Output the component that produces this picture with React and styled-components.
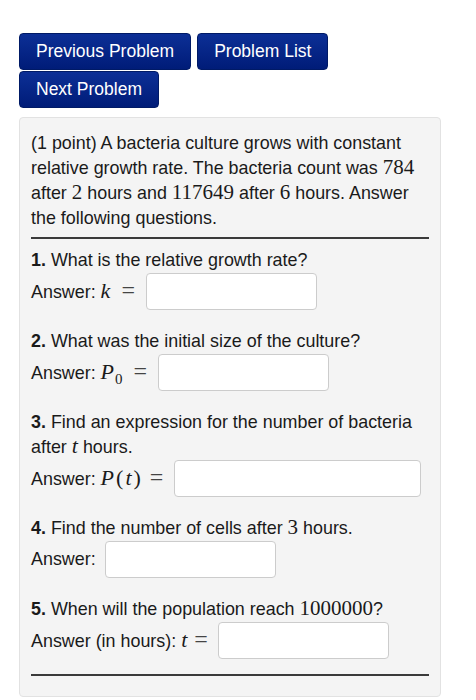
import React from "react";
import styled, { createGlobalStyle } from "styled-components";

const Global = createGlobalStyle`
  body {
    margin: 0;
    background: #ffffff;
    font-family: "Liberation Sans", Arial, sans-serif;
    color: #1a1a1a;
  }
`;

const Page = styled.div`
  padding: 33px 35px 0 19px;
`;

const Nav = styled.div`
  display: flex;
  flex-wrap: wrap;
  width: 320px;
  column-gap: 6px;
  row-gap: 1px;
  margin-bottom: 9px;
`;

const NavButton = styled.button`
  height: 37px;
  padding: 0 16px;
  border: 1px solid #001a66;
  border-radius: 4px;
  background: linear-gradient(#0c2f96, #001c78);
  color: #ffffff;
  font-family: "Liberation Sans", Arial, sans-serif;
  font-size: 17.5px;
  cursor: pointer;
`;

const Panel = styled.div`
  width: 422px;
  box-sizing: border-box;
  background: #f4f4f4;
  border: 1px solid #e2e2e2;
  border-radius: 4px;
  padding: 13px 11px 20px 11px;
  font-size: 17.9px;
  line-height: 25px;
`;

const Intro = styled.p`
  margin: 0;
`;

const Rule = styled.hr`
  border: none;
  border-top: 2px solid #3a3a3a;
  margin: ${p => p.$top || 6}px 0 0 0;
`;

const Question = styled.div`
  margin-top: ${p => p.$first ? 9 : 19}px;
`;

const Prompt = styled.div``;

const Num = styled.b``;

const AnswerRow = styled.div`
  display: flex;
  align-items: center;
  height: 37px;
  gap: ${p => p.$gap || 11}px;
`;

const M = styled.span`
  font-family: "Liberation Serif", "DejaVu Serif", serif;
  font-size: 22px;
  line-height: 1;
  font-style: ${p => p.$i ? "italic" : "normal"};
  margin: 0 ${p => p.$pad || 0}px;
`;

const Mn = styled.span`
  font-family: "Liberation Serif", "DejaVu Serif", serif;
  font-size: 21px;
  line-height: 1;
`;

const Sub = styled.sub`
  font-family: "Liberation Serif", serif;
  font-size: 15px;
  vertical-align: -5px;
  line-height: 0;
  margin-left: 1px;
`;

const Eq = styled.span`
  font-family: "Liberation Serif", serif;
  font-size: 24px;
  line-height: 1;
  margin-left: ${p => p.$gap || 11}px;
  color: #444;
`;

const Input = styled.input`
  width: ${p => p.$w || 171}px;
  height: 37px;
  box-sizing: border-box;
  border: 1px solid #cccccc;
  border-radius: 4px;
  background: #ffffff;
`;

export default function App() {
  return (
    <Page>
      <Global />
      <Nav>
        <NavButton>Previous Problem</NavButton>
        <NavButton>Problem List</NavButton>
        <NavButton>Next Problem</NavButton>
      </Nav>
      <Panel>
        <Intro>
          (1 point) A bacteria culture grows with constant relative growth rate. The bacteria count
          was <Mn>784</Mn> after <Mn>2</Mn> hours and <Mn>117649</Mn> after <Mn>6</Mn> hours.
          Answer the following questions.
        </Intro>
        <Rule />

        <Question $first>
          <Prompt><Num>1.</Num> What is the relative growth rate?</Prompt>
          <AnswerRow>
            <span>Answer: <M $i>k</M><Eq>=</Eq></span>
            <Input />
          </AnswerRow>
        </Question>

        <Question>
          <Prompt><Num>2.</Num> What was the initial size of the culture?</Prompt>
          <AnswerRow>
            <span>Answer: <M $i>P</M><Sub>0</Sub><Eq>=</Eq></span>
            <Input />
          </AnswerRow>
        </Question>

        <Question>
          <Prompt>
            <Num>3.</Num> Find an expression for the number of bacteria after <M $i>t</M> hours.
          </Prompt>
          <AnswerRow>
            <span>
              Answer: <M $i>P</M><M $pad={2}>(</M><M $i>t</M><M $pad={2}>)</M><Eq $gap={7}>=</Eq>
            </span>
            <Input $w={247} />
          </AnswerRow>
        </Question>

        <Question>
          <Prompt><Num>4.</Num> Find the number of cells after <Mn>3</Mn> hours.</Prompt>
          <AnswerRow $gap={9}>
            <span>Answer:</span>
            <Input />
          </AnswerRow>
        </Question>

        <Question>
          <Prompt><Num>5.</Num> When will the population reach <Mn>1000000</Mn>?</Prompt>
          <AnswerRow $gap={10}>
            <span>Answer (in hours): <M $i>t</M><Eq $gap={7}>=</Eq></span>
            <Input />
          </AnswerRow>
        </Question>

        <Rule $top={15} />
      </Panel>
    </Page>
  );
}
